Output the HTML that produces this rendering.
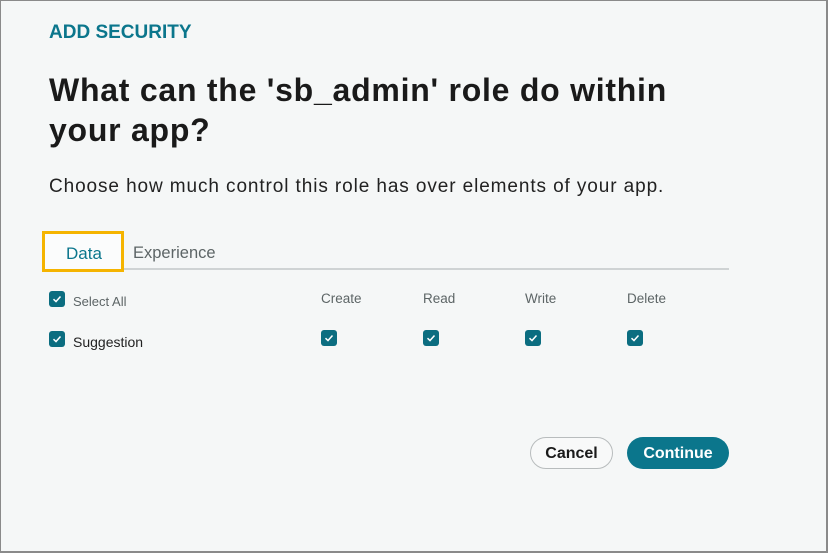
<!DOCTYPE html>
<html><head><style>
html,body{margin:0;padding:0}
body{width:828px;height:553px;background:#f5f7f7;font-family:"Liberation Sans",sans-serif;position:relative;overflow:hidden;box-sizing:border-box;border:1px solid #8a8a8a;border-right:2px solid #8a8a8a;border-bottom:2px solid #8a8a8a}
.a{position:absolute;white-space:nowrap}
.cb{position:absolute;width:16px;height:16px;background:#0b6d80;border-radius:3px}
.cb svg{position:absolute;left:3px;top:3px}
</style></head><body>
<div class="a" style="left:48px;top:21px;font-size:19px;font-weight:bold;color:#0b768c">ADD SECURITY</div>
<div class="a" style="left:48px;top:69px;font-size:32px;font-weight:bold;color:#1a1a1a;line-height:40px;letter-spacing:0.75px">What can the 'sb_admin' role do within<br>your app?</div>
<div class="a" style="left:48px;top:175px;font-size:19px;color:#222;letter-spacing:0.9px">Choose how much control this role has over elements of your app.</div>
<div class="a" style="left:123px;top:267px;width:605px;height:2px;background:#cfd3d4"></div>
<div class="a" style="left:41px;top:230px;width:76px;height:35px;border:3px solid #f5b400;background:#fbfcfc"></div>
<div class="a" style="left:65px;top:243px;font-size:17px;color:#0b768c">Data</div>
<div class="a" style="left:132px;top:243px;font-size:16.5px;color:#5d6566">Experience</div>
<div class="cb" style="left:48px;top:290px"><svg width="10" height="10" viewBox="0 0 10 10"><path d="M1.5 5.2L4 7.5L8.5 2.5" stroke="#fff" stroke-width="1.5" fill="none"/></svg></div>
<div class="a" style="left:72px;top:293px;font-size:13px;color:#5d6566">Select All</div>
<div class="cb" style="left:48px;top:330px"><svg width="10" height="10" viewBox="0 0 10 10"><path d="M1.5 5.2L4 7.5L8.5 2.5" stroke="#fff" stroke-width="1.5" fill="none"/></svg></div>
<div class="a" style="left:72px;top:333px;font-size:14px;color:#222">Suggestion</div>
<div class="a" style="left:320px;top:290px;font-size:13.5px;color:#5d6566">Create</div>
<div class="a" style="left:422px;top:290px;font-size:13.5px;color:#5d6566">Read</div>
<div class="a" style="left:524px;top:290px;font-size:13.5px;color:#5d6566">Write</div>
<div class="a" style="left:626px;top:290px;font-size:13.5px;color:#5d6566">Delete</div>
<div class="cb" style="left:320px;top:329px"><svg width="10" height="10" viewBox="0 0 10 10"><path d="M1.5 5.2L4 7.5L8.5 2.5" stroke="#fff" stroke-width="1.5" fill="none"/></svg></div>
<div class="cb" style="left:422px;top:329px"><svg width="10" height="10" viewBox="0 0 10 10"><path d="M1.5 5.2L4 7.5L8.5 2.5" stroke="#fff" stroke-width="1.5" fill="none"/></svg></div>
<div class="cb" style="left:524px;top:329px"><svg width="10" height="10" viewBox="0 0 10 10"><path d="M1.5 5.2L4 7.5L8.5 2.5" stroke="#fff" stroke-width="1.5" fill="none"/></svg></div>
<div class="cb" style="left:626px;top:329px"><svg width="10" height="10" viewBox="0 0 10 10"><path d="M1.5 5.2L4 7.5L8.5 2.5" stroke="#fff" stroke-width="1.5" fill="none"/></svg></div>
<div class="a" style="left:529px;top:436px;width:81px;height:30px;border:1px solid #b8bcbd;border-radius:16px;background:#f8f9f9;font-size:16px;font-weight:bold;color:#1a1a1a;text-align:center;line-height:32px">Cancel</div>
<div class="a" style="left:626px;top:436px;width:102px;height:32px;border-radius:16px;background:#0b768c;font-size:16px;font-weight:bold;color:#fff;text-align:center;line-height:34px">Continue</div>
</body></html>
